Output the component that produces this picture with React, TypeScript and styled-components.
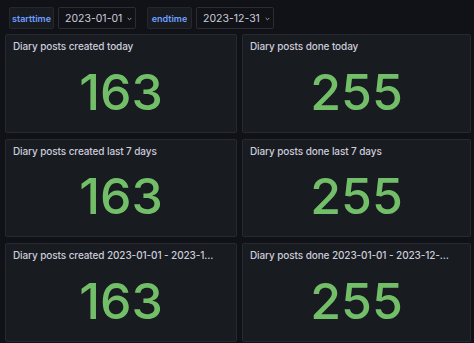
import React from 'react';
import styled, { createGlobalStyle } from 'styled-components';

type Stat = {
  title: string;
  value: number;
};

const stats: Stat[] = [
  { title: 'Diary posts created today', value: 163 },
  { title: 'Diary posts done today', value: 255 },
  { title: 'Diary posts created last 7 days', value: 163 },
  { title: 'Diary posts done last 7 days', value: 255 },
  { title: 'Diary posts created 2023-01-01 - 2023-12-31', value: 163 },
  { title: 'Diary posts done 2023-01-01 - 2023-12-31', value: 255 },
];

const GlobalStyle = createGlobalStyle`
  html, body {
    margin: 0;
    padding: 0;
    background: #111217;
  }
  body {
    font-family: Inter, "Noto Sans", sans-serif;
    color: #ccccdc;
  }
`;

const Page = styled.div`
  width: 474px;
  height: 343px;
  box-sizing: border-box;
  padding: 7px 4px 1px 5px;
  display: flex;
  flex-direction: column;
  gap: 5px;
  overflow: hidden;
`;

const Toolbar = styled.div`
  display: flex;
  align-items: center;
  height: 22px;
  padding-left: 4px;
  gap: 11px;
`;

const VarGroup = styled.div`
  display: flex;
  gap: 4px;
  height: 22px;
`;

const VarLabel = styled.div`
  display: flex;
  align-items: center;
  justify-content: center;
  box-sizing: border-box;
  width: 45px;
  background: #181b1f;
  border: 1px solid #24272d;
  border-radius: 2px;
  color: #6e9fff;
  font-size: 9px;
  font-weight: 600;
`;

const VarSelect = styled.div`
  display: flex;
  align-items: center;
  box-sizing: border-box;
  width: 78px;
  gap: 5px;
  padding: 0 6px;
  background: #111217;
  border: 1px solid #2a2d33;
  border-radius: 2px;
  color: #ccccdc;
  font-size: 10.5px;
  white-space: nowrap;
`;

const Caret = styled.svg`
  flex: none;
  width: 5px;
  height: 4px;
  margin-top: 1px;
`;

const Grid = styled.div`
  flex: 1;
  display: grid;
  grid-template-columns: 232px 229px;
  grid-template-rows: repeat(3, 1fr);
  column-gap: 5px;
  row-gap: 6px;
`;

const Panel = styled.div`
  display: flex;
  flex-direction: column;
  min-width: 0;
  background: #181b1f;
  border: 1px solid #26292f;
  border-radius: 2px;
`;

const Title = styled.div`
  padding: 5px 21px 0 7px;
  height: 18px;
  font-size: 10px;
  font-weight: 500;
  letter-spacing: -0.1px;
  color: #ccccdc;
  white-space: nowrap;
  overflow: hidden;
  text-overflow: ellipsis;
`;

const Value = styled.div`
  flex: 1;
  display: flex;
  align-items: center;
  justify-content: center;
  padding-bottom: 6px;
  font-size: 50px;
  font-weight: 500;
  color: #73bf69;
  line-height: 1;
`;

function Variable({ name, value }: { name: string; value: string }) {
  return (
    <VarGroup>
      <VarLabel>{name}</VarLabel>
      <VarSelect>
        {value}
        <Caret viewBox="0 0 5 4">
          <path d="M0.7 1 L2.5 2.8 L4.3 1" fill="none" stroke="#9fa1ab" strokeWidth="1" />
        </Caret>
      </VarSelect>
    </VarGroup>
  );
}

export default function App() {
  return (
    <>
      <GlobalStyle />
      <Page>
        <Toolbar>
          <Variable name="starttime" value="2023-01-01" />
          <Variable name="endtime" value="2023-12-31" />
        </Toolbar>
        <Grid>
          {stats.map((s) => (
            <Panel key={s.title}>
              <Title>{s.title}</Title>
              <Value>{s.value}</Value>
            </Panel>
          ))}
        </Grid>
      </Page>
    </>
  );
}
